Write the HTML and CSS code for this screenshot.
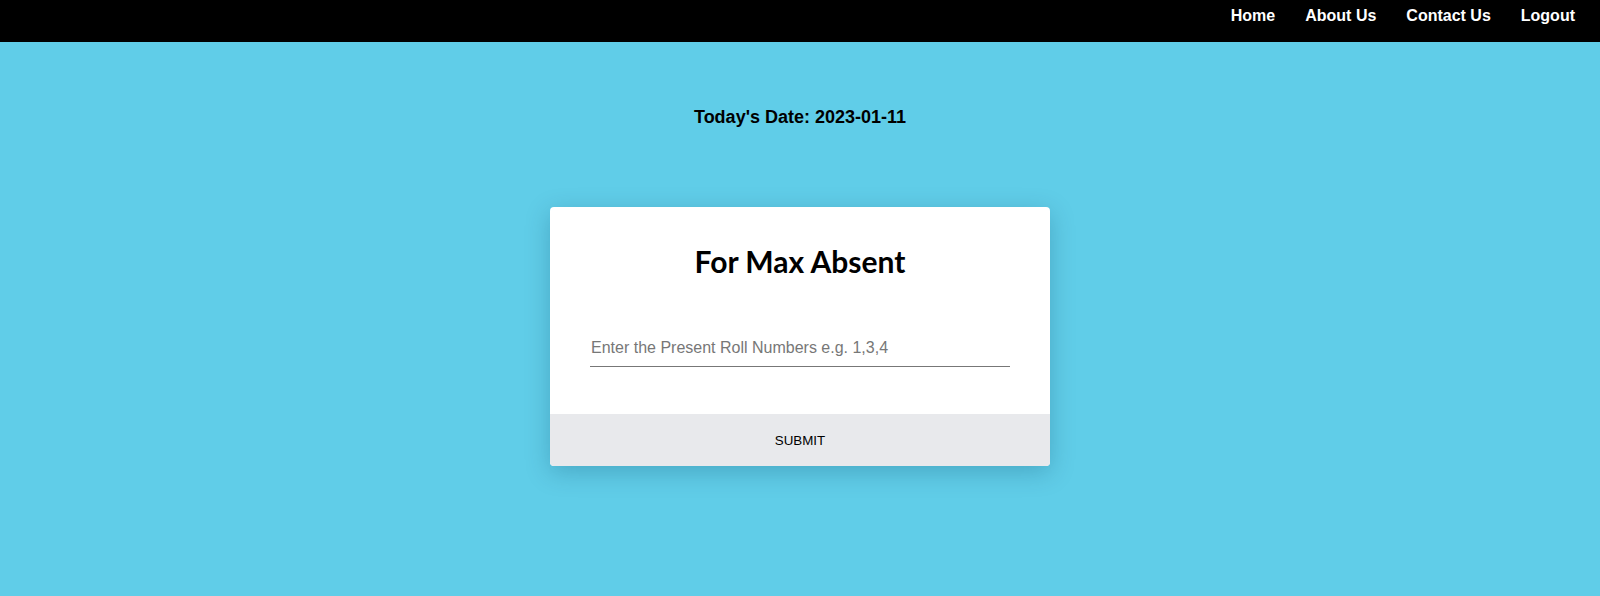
FILE: index.html
```html
<!DOCTYPE html>
<html>
<head>
<meta charset="utf-8">
<link rel="stylesheet" href="styles.css">
</head>
<body>
<nav class="navbar">
  <a class="nav-link" href="#">Home</a>
  <a class="nav-link" href="#">About Us</a>
  <a class="nav-link" href="#">Contact Us</a>
  <a class="nav-link" href="#">Logout</a>
</nav>
<main class="page">
  <p class="date">Today's Date: 2023-01-11</p>
  <form class="card">
    <div class="card-body">
      <h1 class="card-title">For Max Absent</h1>
      <input class="field" type="text" placeholder="Enter the Present Roll Numbers e.g. 1,3,4">
    </div>
    <button class="submit" type="button">SUBMIT</button>
  </form>
</main>
</body>
</html>
```
FILE: styles.css
```css
* { box-sizing: border-box; }
html, body { margin: 0; padding: 0; }
body {
  background: #60cde8;
  font-family: "Liberation Sans", Arial, sans-serif;
  height: 596px;
  overflow: hidden;
}
.navbar {
  background: #000;
  height: 42px;
  display: flex;
  justify-content: flex-end;
  align-items: flex-start;
  gap: 30px;
  padding: 7px 25px 0 0;
}
.nav-link {
  color: #fff;
  font-weight: bold;
  font-size: 16px;
  line-height: 18px;
  text-decoration: none;
}
.page {
  display: flex;
  flex-direction: column;
  align-items: center;
}
.date {
  margin: 64px 0 0;
  font-size: 18px;
  font-weight: bold;
  line-height: 22px;
  color: #000;
}
.card {
  margin-top: 79px;
  width: 500px;
  background: #fff;
  border-radius: 4px;
  overflow: hidden;
  box-shadow: 0 6px 24px rgba(0, 60, 90, 0.25);
  display: flex;
  flex-direction: column;
}
.card-body {
  padding: 34px 40px 47px;
  display: flex;
  flex-direction: column;
}
.card-title {
  margin: 0;
  text-align: center;
  font-family: Lato, "Noto Sans", sans-serif;
  font-weight: bold;
  font-size: 30px;
  line-height: 40px;
  color: #000;
}
.field {
  margin-top: 49px;
  border: none;
  border-bottom: 1px solid #777;
  outline: none;
  padding: 0 0 0 1px;
  height: 37px;
  font-family: "Liberation Sans", Arial, sans-serif;
  font-size: 16px;
  color: #000;
  background: transparent;
}
.field::placeholder { color: #777; }
.submit {
  height: 52px;
  border: none;
  background: #e8e9ec;
  font-family: "Liberation Sans", Arial, sans-serif;
  font-size: 13.33px;
  color: #000;
  cursor: pointer;
}
```
